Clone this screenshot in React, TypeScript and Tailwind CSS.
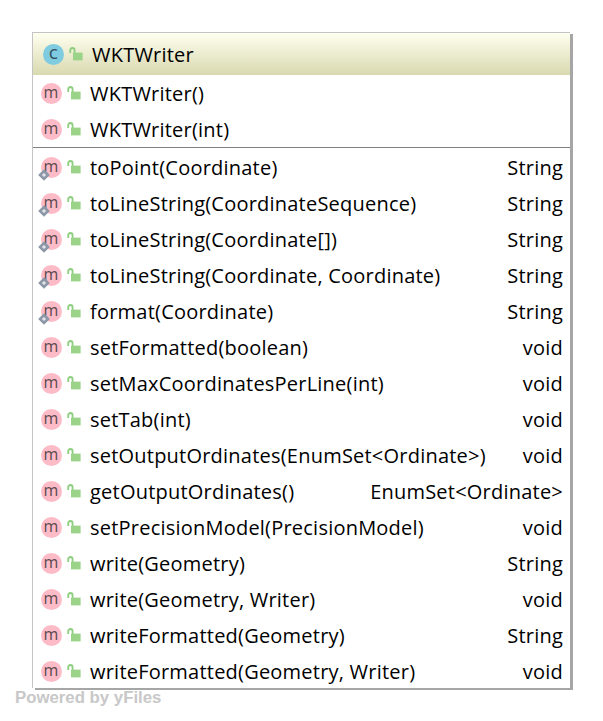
const ctors = ["WKTWriter()", "WKTWriter(int)"];

const methods: { name: string; type: string; override?: boolean }[] = [
  { name: "toPoint(Coordinate)", type: "String", override: true },
  { name: "toLineString(CoordinateSequence)", type: "String", override: true },
  { name: "toLineString(Coordinate[])", type: "String", override: true },
  { name: "toLineString(Coordinate, Coordinate)", type: "String", override: true },
  { name: "format(Coordinate)", type: "String", override: true },
  { name: "setFormatted(boolean)", type: "void" },
  { name: "setMaxCoordinatesPerLine(int)", type: "void" },
  { name: "setTab(int)", type: "void" },
  { name: "setOutputOrdinates(EnumSet<Ordinate>)", type: "void" },
  { name: "getOutputOrdinates()", type: "EnumSet<Ordinate>" },
  { name: "setPrecisionModel(PrecisionModel)", type: "void" },
  { name: "write(Geometry)", type: "String" },
  { name: "write(Geometry, Writer)", type: "void" },
  { name: "writeFormatted(Geometry)", type: "String" },
  { name: "writeFormatted(Geometry, Writer)", type: "void" },
];

function OpenLock() {
  return (
    <svg width="14" height="14" viewBox="0 0 14 14" className="shrink-0">
      <path d="M1.2 6V3.4C1.2 2 2.2 1 3.4 1S5.6 2 5.6 3.4V6" fill="none" stroke="#8fce7e" strokeWidth="1.8" />
      <rect x="4" y="5.6" width="9.6" height="7.8" fill="#9bd488" />
    </svg>
  );
}

function Badge({ letter, override }: { letter: string; override?: boolean }) {
  return (
    <div className="relative shrink-0">
      <div className="flex h-[21px] w-[21px] items-center justify-center rounded-full bg-[#fdbbc8] pb-[2px] pr-[1px] text-[16px] leading-none tracking-normal text-[#5a4a4e]">
        {letter}
      </div>
      {override && (
        <svg width="12" height="12" viewBox="0 0 12 12" className="absolute left-[-3px] top-[12px]">
          <path d="M6 2L10 6L6 10L2 6Z" fill="#e4e4e8" stroke="#8c98a8" strokeWidth="2.6" />
        </svg>
      )}
    </div>
  );
}

function Row({ name, type, override }: { name: string; type?: string; override?: boolean }) {
  return (
    <div className="flex h-9 items-center pl-[8px] pr-[7px]">
      <Badge letter="m" override={override} />
      <div className="ml-[5px]">
        <OpenLock />
      </div>
      <span className="ml-[9px] whitespace-nowrap pt-[2px] text-black">{name}</span>
      {type && <span className="ml-auto whitespace-nowrap pt-[2px] text-black">{type}</span>}
    </div>
  );
}

export default function App() {
  return (
    <div className="relative h-[721px] w-[603px] overflow-hidden bg-white pl-[32px] pt-[32px] font-['Open_Sans',sans-serif] text-[20px] tracking-[0.22px]">
      <div className="h-[656px] w-[538px] border-t border-l border-[#c4c4c4] bg-white shadow-[3px_2px_0_#a6a6a6]">
        <div className="flex h-[42px] items-center bg-gradient-to-b from-[#fffff0] to-[#d9d9b0] pl-[10px]">
          <div className="flex h-[21px] w-[21px] shrink-0 items-center justify-center rounded-full bg-[#7fcbdf] pb-[3px] text-[19px] leading-none text-[#35505c]">
            c
          </div>
          <div className="ml-[5px]">
            <OpenLock />
          </div>
          <span className="ml-[9px] pt-[2px] text-black">WKTWriter</span>
        </div>
        <div className="border-b border-[#808080]">
          {ctors.map((c) => (
            <Row key={c} name={c} />
          ))}
        </div>
        <div className="pt-[1px]">
          {methods.map((m, i) => (
            <Row key={i} name={m.name} type={m.type} override={m.override} />
          ))}
        </div>
      </div>
      <div className="absolute left-[15px] top-[688px] font-['Liberation_Sans',sans-serif] text-[16.8px] font-bold leading-[20px] tracking-normal text-[#c8c8c8]">
        Powered by yFiles
      </div>
    </div>
  );
}
